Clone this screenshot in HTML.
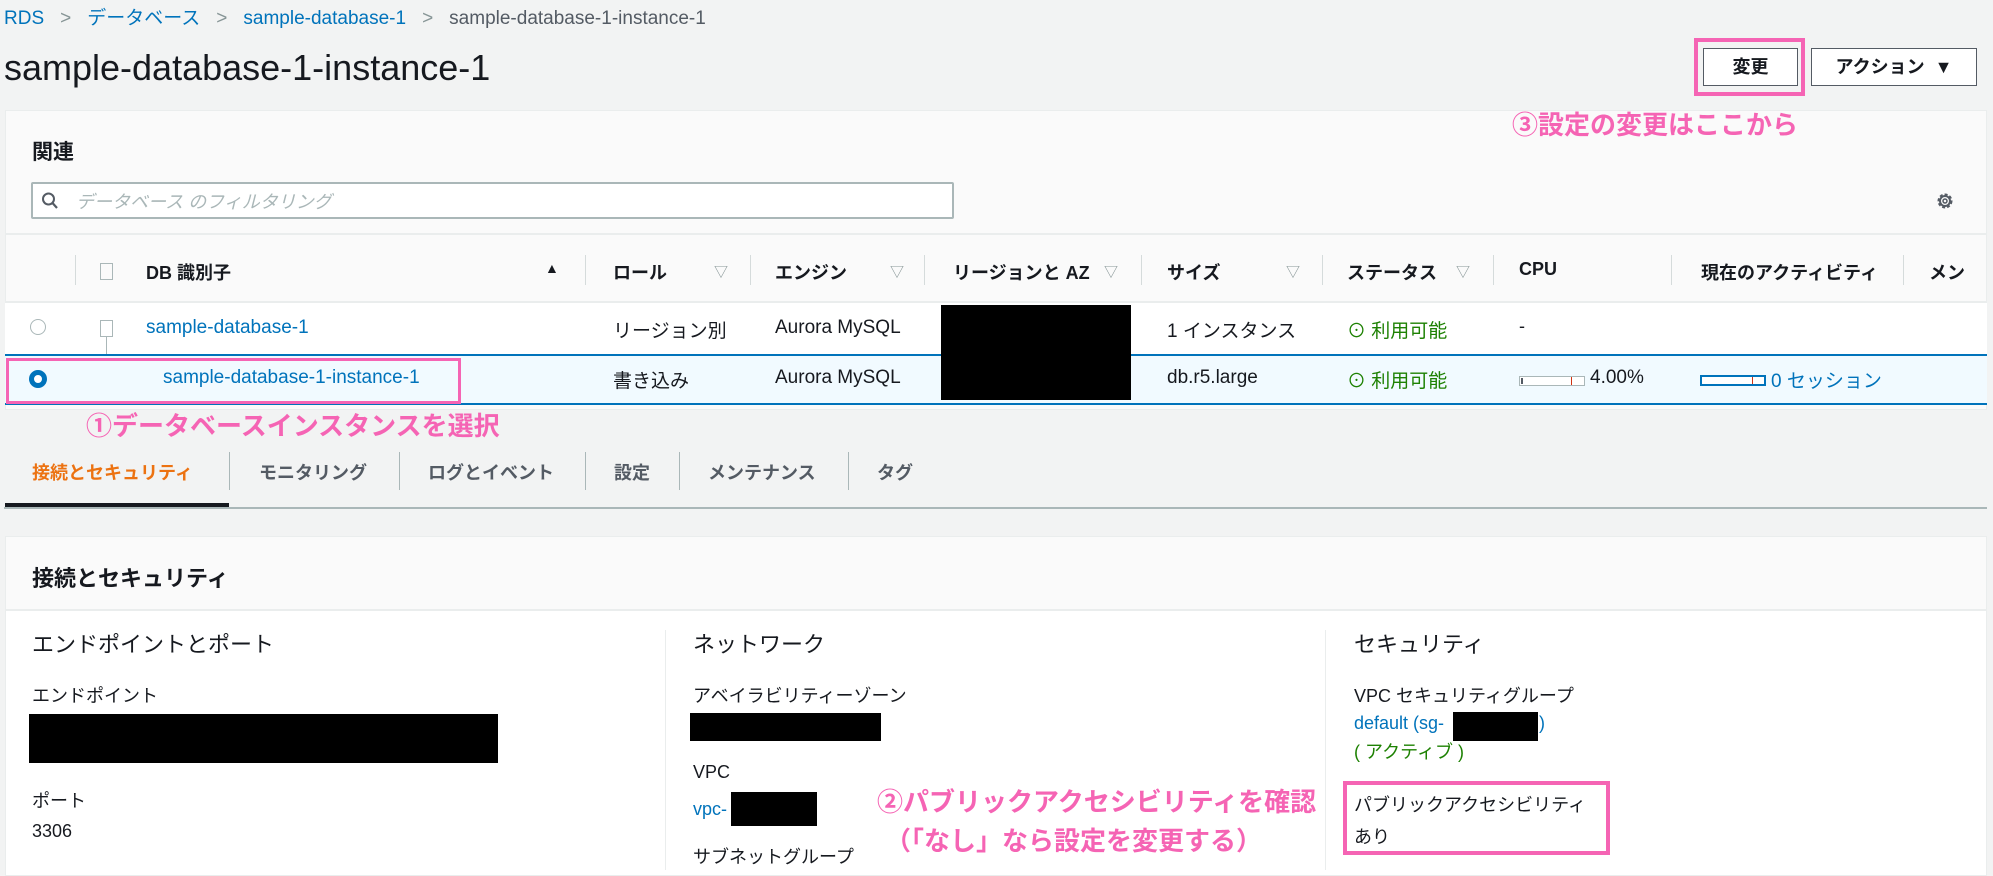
<!DOCTYPE html><html><head><meta charset="utf-8"><style>
*{box-sizing:border-box;margin:0;padding:0}
body{width:1993px;height:869px;background:#f2f3f3;font-family:"Liberation Sans","Noto Sans CJK JP",sans-serif;color:#16191f;position:relative;overflow:hidden;font-size:18px}
.a{position:absolute;white-space:nowrap}
.l{color:#0073bb}
.g{color:#1d8102}
.p{color:#f564b4;font-size:26px;font-weight:bold;z-index:5}
.blk{position:absolute;background:#000}
.div{position:absolute;width:1px;background:#d5dbdb}
.tri{color:#879596;font-size:14px}
</style></head><body>
<div class="a" style="left:4px;top:3px;font-size:19px"><span class="l">RDS</span><span style="color:#879596;margin:0 16px">&gt;</span><span class="l">データベース</span><span style="color:#879596;margin:0 16px">&gt;</span><span class="l">sample-database-1</span><span style="color:#879596;margin:0 16px">&gt;</span><span style="color:#545b64">sample-database-1-instance-1</span></div>
<div class="a" style="left:4px;top:47px;font-size:36px">sample-database-1-instance-1</div>
<div class="a" style="left:1694px;top:38px;width:111px;height:58px;border:4px solid #f564b4"></div>
<div class="a" style="left:1703px;top:48px;width:95px;height:38px;border:1px solid #545b64;background:#fff;font-weight:bold;font-size:18px;text-align:center;line-height:36px">変更</div>
<div class="a" style="left:1811px;top:48px;width:166px;height:38px;border:1px solid #545b64;background:#fff;font-weight:bold;font-size:18px;text-align:center;line-height:36px">アクション &nbsp;▼</div>

<div class="a" style="left:5px;top:110px;width:1982px;height:300px;background:#fafafa;border:1px solid #eaeded"></div>
<div class="a p" style="left:1512px;top:105px">③設定の変更はここから</div>
<div class="a" style="left:32px;top:136px;font-size:21px;font-weight:bold">関連</div>
<div class="a" style="left:31px;top:182px;width:923px;height:37px;border:2px solid #aab7b8;background:#fff;border-radius:2px"></div>
<svg class="a" style="left:41px;top:191px" width="18" height="20"><circle cx="7.5" cy="8" r="5.5" fill="none" stroke="#545b64" stroke-width="2"/><line x1="11.5" y1="12" x2="16" y2="17" stroke="#545b64" stroke-width="2.2"/></svg>
<div class="a" style="left:76px;top:188px;color:#aab7b8;font-style:italic;font-size:18px">データベース のフィルタリング</div>
<svg class="a" style="left:1935px;top:190px" width="20" height="22" viewBox="0 0 20 20"><circle cx="10" cy="10" r="6.5" fill="none" stroke="#545b64" stroke-width="2" stroke-dasharray="3 2"/><circle cx="10" cy="10" r="5" fill="none" stroke="#545b64" stroke-width="2"/><circle cx="10" cy="10" r="2" fill="none" stroke="#545b64" stroke-width="1.5"/></svg>
<div class="a" style="left:5px;top:233px;width:1982px;height:2px;background:#eaeded"></div>
<div class="a" style="left:5px;top:301px;width:1982px;height:2px;background:#eaeded"></div>
<div class="div" style="left:75px;top:255px;height:30px"></div>
<div class="div" style="left:585px;top:255px;height:30px"></div>
<div class="div" style="left:750px;top:255px;height:30px"></div>
<div class="div" style="left:924px;top:255px;height:30px"></div>
<div class="div" style="left:1141px;top:255px;height:30px"></div>
<div class="div" style="left:1322px;top:255px;height:30px"></div>
<div class="div" style="left:1493px;top:255px;height:30px"></div>
<div class="div" style="left:1671px;top:255px;height:30px"></div>
<div class="div" style="left:1903px;top:255px;height:30px"></div>
<div class="a" style="left:100px;top:263px;width:13px;height:17px;border:1px solid #aab7b8"></div>
<div class="a" style="top:259px;left:146px;font-weight:bold;font-size:18px">DB 識別子</div>
<div class="a" style="top:260px;left:545px;font-size:14px">▲</div>
<div class="a" style="top:259px;left:613px;font-weight:bold;font-size:18px">ロール</div><div class="a tri" style="top:262px;left:714px">▽</div>
<div class="a" style="top:259px;left:775px;font-weight:bold;font-size:18px">エンジン</div><div class="a tri" style="top:262px;left:890px">▽</div>
<div class="a" style="top:259px;left:953px;font-weight:bold;font-size:18px">リージョンと AZ</div><div class="a tri" style="top:262px;left:1104px">▽</div>
<div class="a" style="top:259px;left:1167px;font-weight:bold;font-size:18px">サイズ</div><div class="a tri" style="top:262px;left:1286px">▽</div>
<div class="a" style="top:259px;left:1347px;font-weight:bold;font-size:18px">ステータス</div><div class="a tri" style="top:262px;left:1456px">▽</div>
<div class="a" style="top:259px;left:1519px;font-weight:bold;font-size:18px">CPU</div>
<div class="a" style="top:259px;left:1701px;font-weight:bold;font-size:18px">現在のアクティビティ</div>
<div class="a" style="top:259px;left:1929px;font-weight:bold;font-size:18px">メン</div>

<div class="a" style="left:5px;top:303px;width:1982px;height:51px;background:#fff"></div>
<div class="a" style="left:30px;top:319px;width:16px;height:16px;border:1.5px solid #aab7b8;border-radius:50%"></div>
<div class="a" style="left:100px;top:320px;width:13px;height:17px;border:1px solid #aab7b8"></div>
<div class="a" style="left:106px;top:337px;width:1px;height:43px;background:#aab7b8"></div>
<div class="a" style="left:106px;top:380px;width:25px;height:1px;background:#aab7b8"></div>
<div class="a l" style="left:146px;top:317px;font-size:19px">sample-database-1</div>
<div class="a" style="left:613px;top:316px;font-size:19px">リージョン別</div>
<div class="a" style="left:775px;top:317px;font-size:19px">Aurora MySQL</div>
<div class="a" style="left:1167px;top:316px;font-size:19px">1 インスタンス</div>
<div class="a g" style="left:1347px;top:316px;font-size:19px">⊙ 利用可能</div>
<div class="a" style="left:1519px;top:316px">-</div>

<div class="a" style="left:5px;top:354px;width:1982px;height:51px;background:#f1faff;border-top:2px solid #0073bb;border-bottom:2px solid #0073bb"></div>
<div class="a" style="left:29px;top:370px;width:18px;height:18px;border:5px solid #0073bb;border-radius:50%;background:#fff"></div>
<div class="a l" style="left:163px;top:367px;font-size:19px">sample-database-1-instance-1</div>
<div class="a" style="left:6px;top:358px;width:455px;height:46px;border:3px solid #f564b4"></div>
<div class="a" style="left:613px;top:366px;font-size:19px">書き込み</div>
<div class="a" style="left:775px;top:367px;font-size:19px">Aurora MySQL</div>
<div class="a" style="left:1167px;top:367px;font-size:19px">db.r5.large</div>
<div class="a g" style="left:1347px;top:366px;font-size:19px">⊙ 利用可能</div>
<div class="a" style="left:1519px;top:376px;width:66px;height:10px;border:1px solid #aab7b8;background:#fff"><div style="position:absolute;left:1px;top:1px;width:2px;height:6px;background:#545b64"></div><div style="position:absolute;left:51px;top:0;width:1px;height:8px;background:#d13212"></div></div>
<div class="a" style="left:1590px;top:367px;font-size:19px">4.00%</div>
<div class="a" style="left:1700px;top:375px;width:66px;height:11px;border:2px solid #0073bb;background:#fff"><div style="position:absolute;left:50px;top:0;width:1px;height:7px;background:#d13212"></div></div>
<div class="a l" style="left:1771px;top:366px;font-size:19px">0 セッション</div>
<div class="blk" style="left:941px;top:305px;width:190px;height:95px"></div>
<div class="a p" style="left:86px;top:406px">①データベースインスタンスを選択</div>

<div class="a" style="left:32px;top:459px;color:#ec7211;font-weight:bold;font-size:18px">接続とセキュリティ</div>
<div class="div" style="left:229px;top:452px;height:38px;background:#aab7b8"></div>
<div class="a" style="left:259px;top:459px;color:#545b64;font-weight:bold;font-size:18px">モニタリング</div>
<div class="div" style="left:399px;top:452px;height:38px;background:#aab7b8"></div>
<div class="a" style="left:428px;top:459px;color:#545b64;font-weight:bold;font-size:18px">ログとイベント</div>
<div class="div" style="left:585px;top:452px;height:38px;background:#aab7b8"></div>
<div class="a" style="left:614px;top:459px;color:#545b64;font-weight:bold;font-size:18px">設定</div>
<div class="div" style="left:679px;top:452px;height:38px;background:#aab7b8"></div>
<div class="a" style="left:708px;top:459px;color:#545b64;font-weight:bold;font-size:18px">メンテナンス</div>
<div class="div" style="left:848px;top:452px;height:38px;background:#aab7b8"></div>
<div class="a" style="left:877px;top:459px;color:#545b64;font-weight:bold;font-size:18px">タグ</div>
<div class="a" style="left:4px;top:507px;width:1983px;height:2px;background:#aab7b8"></div>
<div class="a" style="left:5px;top:503px;width:224px;height:4px;background:#16191f"></div>

<div class="a" style="left:5px;top:536px;width:1982px;height:340px;background:#fff;border:1px solid #eaeded"></div>
<div class="a" style="left:6px;top:537px;width:1980px;height:74px;background:#fafafa;border-bottom:2px solid #eaeded"></div>
<div class="a" style="left:32px;top:561px;font-size:22px;font-weight:bold">接続とセキュリティ</div>
<div class="div" style="left:665px;top:630px;height:240px;background:#eaeded"></div>
<div class="div" style="left:1325px;top:630px;height:240px;background:#eaeded"></div>
<div class="a" style="left:32px;top:627px;font-size:22px">エンドポイントとポート</div>
<div class="a" style="left:32px;top:682px">エンドポイント</div>
<div class="blk" style="left:29px;top:714px;width:469px;height:49px"></div>
<div class="a" style="left:32px;top:787px">ポート</div>
<div class="a" style="left:32px;top:821px">3306</div>
<div class="a" style="left:693px;top:627px;font-size:22px">ネットワーク</div>
<div class="a" style="left:693px;top:682px">アベイラビリティーゾーン</div>
<div class="blk" style="left:690px;top:713px;width:191px;height:28px"></div>
<div class="a" style="left:693px;top:762px">VPC</div>
<div class="a l" style="left:693px;top:799px">vpc-</div>
<div class="blk" style="left:731px;top:792px;width:86px;height:34px"></div>
<div class="a" style="left:693px;top:843px">サブネットグループ</div>
<div class="a p" style="left:877px;top:782px">②パブリックアクセシビリティを確認</div>
<div class="a p" style="left:885px;top:821px">（「なし」なら設定を変更する）</div>
<div class="a" style="left:1354px;top:627px;font-size:22px">セキュリティ</div>
<div class="a" style="left:1354px;top:682px">VPC セキュリティグループ</div>
<div class="a l" style="left:1354px;top:713px">default (sg-</div>
<div class="blk" style="left:1453px;top:712px;width:85px;height:29px"></div>
<div class="a l" style="left:1539px;top:713px">)</div>
<div class="a g" style="left:1354px;top:738px">( アクティブ )</div>
<div class="a" style="left:1343px;top:781px;width:267px;height:74px;border:4px solid #f564b4"></div>
<div class="a" style="left:1354px;top:791px">パブリックアクセシビリティ</div>
<div class="a" style="left:1354px;top:823px">あり</div>
</body></html>
